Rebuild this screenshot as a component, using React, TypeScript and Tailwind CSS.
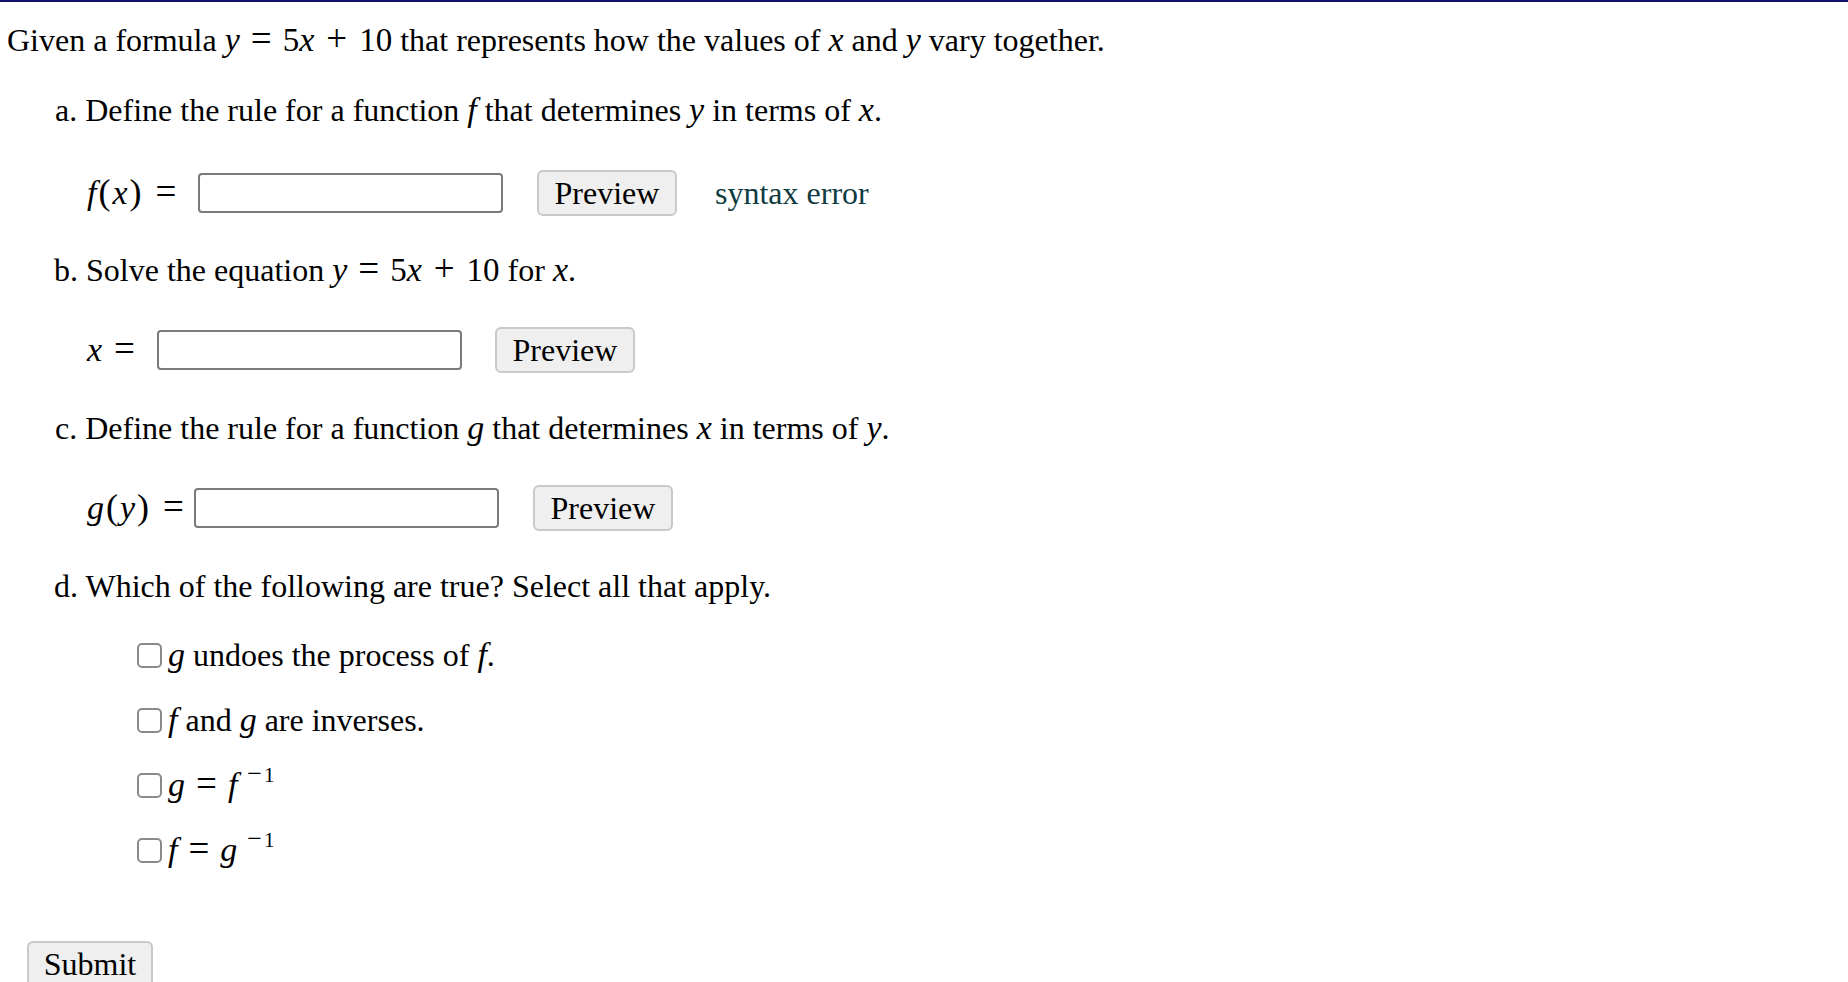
import type { ReactNode } from 'react';

// math pieces: MathJax renders a touch larger than the surrounding text
const V = ({ children }: { children: ReactNode }) => (
  <span className="italic text-[34px] leading-none">{children}</span>
);
const N = ({ children }: { children: ReactNode }) => (
  <span className="text-[33px] leading-none">{children}</span>
);
const Eq = () => <span className="mx-[11px] text-[37px] leading-none">=</span>;
const LabelEq = () => <span className="ml-[12px] text-[37px] leading-none">=</span>;
const Plus = () => <span className="mx-[12px] text-[37px] leading-none">+</span>;
const Paren = ({ children }: { children: ReactNode }) => (
  <span className="mx-[2px] text-[36px] leading-none">{children}</span>
);

const Inv = () => (
  <sup className="relative -top-[14px] ml-[10px] text-[21px] leading-none">
    <span className="mr-[2px] text-[26px]">−</span>1
  </sup>
);

const PreviewButton = () => (
  <button
    type="button"
    className="h-[46px] w-[140px] shrink-0 rounded-[6px] border-2 border-[#c9c9c9] bg-[#efefef] text-black leading-none"
  >
    Preview
  </button>
);

const AnswerBox = () => (
  <input
    type="text"
    className="h-[40px] w-[305px] shrink-0 rounded-[4px] border-2 border-[#7a7a7a] bg-white outline-none"
  />
);

const Check = ({ children }: { children: ReactNode }) => (
  <div className="flex h-[40px] items-center pl-[137px]">
    <span className="h-[25px] w-[25px] shrink-0 rounded-[5px] border-2 border-[#8a8a8a] bg-white" />
    <span className="ml-[6px] whitespace-nowrap leading-[40px]">{children}</span>
  </div>
);

export default function App() {
  return (
    <div className="min-h-screen bg-white text-black font-['Liberation_Serif','Times_New_Roman',serif] text-[32px]">
      <div className="h-[2px] bg-[#10106e]" />

      {/* Problem statement */}
      <div className="mt-[18px] h-[40px] pl-[7px] leading-[40px] whitespace-nowrap">
        Given a formula <V>y</V>
        <Eq />
        <N>5</N>
        <V>x</V>
        <Plus />
        <N>10</N> that represents how the values of <V>x</V> and <V>y</V> vary together.
      </div>

      {/* a */}
      <div className="mt-[30px] h-[40px] pl-[55px] leading-[40px] whitespace-nowrap">
        a. Define the rule for a function <V>f</V> that determines <V>y</V> in terms of <V>x</V>.
      </div>
      <div className="mt-[39px] flex h-[48px] items-center pl-[87px]">
        <span className="w-[111px] shrink-0 whitespace-nowrap leading-[40px]">
          <V>f</V>
          <Paren>(</Paren>
          <V>x</V>
          <Paren>)</Paren>
          <LabelEq />
        </span>
        <AnswerBox />
        <div className="ml-[34px]">
          <PreviewButton />
        </div>
        <span className="ml-[38px] text-[#0f3b42]">syntax error</span>
      </div>

      {/* b */}
      <div className="mt-[33px] h-[40px] pl-[54px] leading-[40px] whitespace-nowrap">
        b. Solve the equation <V>y</V>
        <Eq />
        <N>5</N>
        <V>x</V>
        <Plus />
        <N>10</N> for <V>x</V>.
      </div>
      <div className="mt-[36px] flex h-[48px] items-center pl-[87px]">
        <span className="w-[70px] shrink-0 whitespace-nowrap leading-[40px]">
          <V>x</V>
          <LabelEq />
        </span>
        <AnswerBox />
        <div className="ml-[33px]">
          <PreviewButton />
        </div>
      </div>

      {/* c */}
      <div className="mt-[34px] h-[40px] pl-[55px] leading-[40px] whitespace-nowrap">
        c. Define the rule for a function <V>g</V> that determines <V>x</V> in terms of <V>y</V>.
      </div>
      <div className="mt-[36px] flex h-[48px] items-center pl-[87px]">
        <span className="w-[107px] shrink-0 whitespace-nowrap leading-[40px]">
          <V>g</V>
          <Paren>(</Paren>
          <V>y</V>
          <Paren>)</Paren>
          <LabelEq />
        </span>
        <AnswerBox />
        <div className="ml-[34px]">
          <PreviewButton />
        </div>
      </div>

      {/* d */}
      <div className="mt-[34px] h-[40px] pl-[54px] leading-[40px] whitespace-nowrap">
        d. Which of the following are true? Select all that apply.
      </div>
      <div className="mt-[29px] flex flex-col gap-[25px]">
        <Check>
          <V>g</V> undoes the process of <V>f</V>.
        </Check>
        <Check>
          <V>f</V> and <V>g</V> are inverses.
        </Check>
        <Check>
          <V>g</V>
          <Eq />
          <V>f</V>
          <Inv />
        </Check>
        <Check>
          <V>f</V>
          <Eq />
          <V>g</V>
          <Inv />
        </Check>
      </div>

      <div className="mt-[70px] pl-[27px]">
        <button
          type="button"
          className="h-[47px] w-[126px] rounded-[6px] border-2 border-[#c9c9c9] bg-[#efefef] text-black leading-none"
        >
          Submit
        </button>
      </div>
    </div>
  );
}
